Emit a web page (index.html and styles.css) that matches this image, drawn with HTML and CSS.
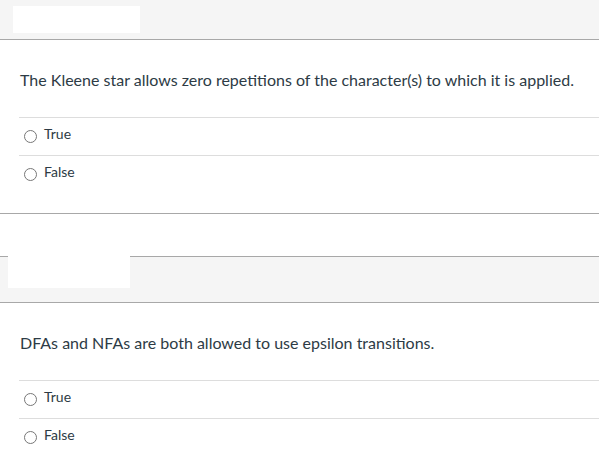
FILE: index.html
```html
<!DOCTYPE html>
<html>
<head>
<meta charset="utf-8">
<link rel="stylesheet" href="styles.css">
</head>
<body>
<div class="header first">
  <div class="redact redact-first"></div>
</div>
<div class="question">
  <div class="qtext">The Kleene star allows zero repetitions of the character(s) to which it is applied.</div>
  <div class="answers">
    <div class="answer"><span class="radio"></span><span class="label">True</span></div>
    <div class="answer"><span class="radio"></span><span class="label">False</span></div>
  </div>
</div>
<div class="header second">
  <div class="redact redact-second"></div>
</div>
<div class="question">
  <div class="qtext">DFAs and NFAs are both allowed to use epsilon transitions.</div>
  <div class="answers">
    <div class="answer"><span class="radio"></span><span class="label">True</span></div>
    <div class="answer"><span class="radio"></span><span class="label">False</span></div>
  </div>
</div>
</body>
</html>
```
FILE: styles.css
```css
html, body {
  margin: 0;
  padding: 0;
  background: #ffffff;
}
body {
  font-family: Lato, "Open Sans", sans-serif;
  color: #2d3b45;
  overflow: hidden;
}
.header {
  background: #f5f5f5;
  border-bottom: 1px solid #a8a8a8;
  display: flex;
  align-items: flex-start;
}
.header.first {
  box-sizing: border-box;
  height: 40px;
  padding-left: 13px;
  padding-top: 6px;
}
.header.second {
  margin-top: 42px;
  border-top: 1px solid #a8a8a8;
  height: 45px;
  padding-left: 8px;
}
.redact {
  background: #ffffff;
}
.redact-first {
  width: 127px;
  height: 27px;
}
.redact-second {
  width: 122px;
  height: 32px;
  margin-top: -1px;
}
.question {
  border-bottom: 1px solid #a8a8a8;
  padding-bottom: 20px;
}
.qtext {
  font-size: 16px;
  line-height: 20px;
  padding: 30px 0 27px 20px;
}
.answers {
  margin-left: 19px;
}
.answer {
  border-top: 1px solid #dddddd;
  height: 37px;
  display: flex;
  align-items: center;
  padding-left: 5px;
  font-size: 14px;
}
.radio {
  width: 11px;
  height: 11px;
  border: 1px solid #777777;
  border-radius: 50%;
  margin-right: 7px;
  flex: none;
  position: relative;
  top: 0px;
}
.label {
  line-height: 20px;
  position: relative;
  top: -3px;
}
```
